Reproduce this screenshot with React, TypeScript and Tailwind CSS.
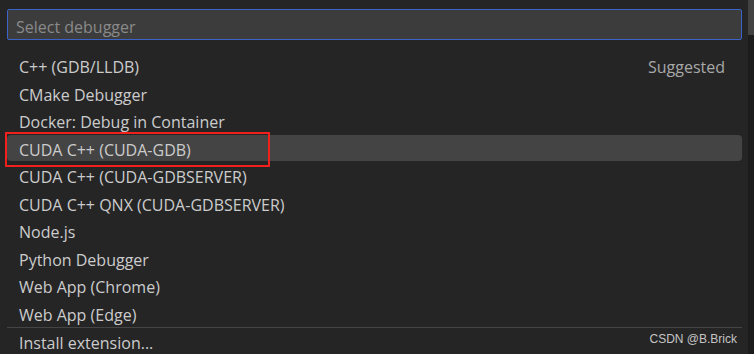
import React from "react";

const items = [
  { label: "C++ (GDB/LLDB)", note: "Suggested" },
  { label: "CMake Debugger" },
  { label: "Docker: Debug in Container" },
  { label: "CUDA C++ (CUDA-GDB)", active: true },
  { label: "CUDA C++ (CUDA-GDBSERVER)" },
  { label: "CUDA C++ QNX (CUDA-GDBSERVER)" },
  { label: "Node.js" },
  { label: "Python Debugger" },
  { label: "Web App (Chrome)" },
  { label: "Web App (Edge)" },
];

export default function App() {
  return (
    <div
      className="w-[754px] h-[354px] overflow-hidden flex bg-[#252526] text-[#cccccc]"
      style={{ fontFamily: '"Open Sans", "Noto Sans", sans-serif' }}
    >
      {/* picker */}
      <div className="relative flex-1 flex flex-col pl-[7px] pr-[6px]">
        <div className="mt-[9px] h-[33px] flex items-center px-[8px] pt-[6px] bg-[#3c3c3c] border border-[#3b63c9] rounded-[2px]">
          <span className="text-[16px] leading-none text-[#8a8a8a]">Select debugger</span>
        </div>

        <div className="mt-[12px] flex flex-col">
          {items.map((item) => (
            <div key={item.label} className="relative h-[27.5px] flex items-center pt-[4px]">
              {item.active && (
                <>
                  <div className="absolute inset-x-0 top-[0.5px] bottom-[0.5px] rounded-[4px] bg-[#444444]" />
                  <div className="absolute left-[-2px] w-[265px] top-[-2px] h-[35px] border-2 border-[#f0201c]" />
                </>
              )}
              <span className="relative pl-[12px] text-[16px] leading-none">{item.label}</span>
              {item.note && (
                <span className="relative ml-auto pr-[17px] text-[16px] leading-none text-[#a8a8a8]">
                  {item.note}
                </span>
              )}
            </div>
          ))}
          <div className="h-[27.5px] flex items-center pt-[4px] border-t border-[#454545]">
            <span className="pl-[12px] text-[16px] leading-none">Install extension...</span>
          </div>
        </div>

        <span
          className="absolute right-[11px] bottom-[9px] text-[12px] leading-none text-[#c4c4c4]"
          style={{ fontFamily: '"Liberation Sans", Arial, sans-serif' }}
        >
          CSDN @B.Brick
        </span>
      </div>

      {/* scrollbar strip */}
      <div className="w-[6px] flex flex-col bg-[#1c1c1c]">
        <div className="h-[35px] bg-[#424242]" />
      </div>
    </div>
  );
}
